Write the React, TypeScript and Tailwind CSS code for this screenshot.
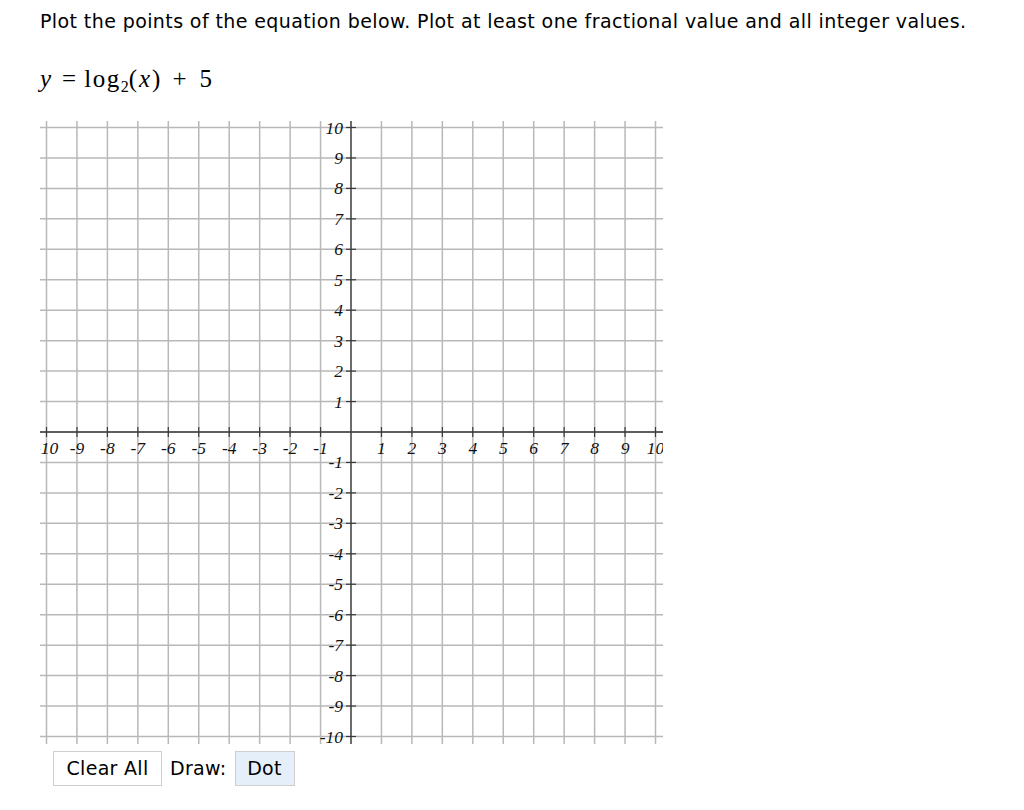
import React from 'react';

const PAD = 6.5;
const S = 30.45;
const SIZE = 623;

const px = (v: number) => PAD + (v + 10) * S;
const py = (v: number) => PAD + (10 - v) * S;

const range = Array.from({ length: 21 }, (_, i) => i - 10);

const Graph: React.FC = () => {
  return (
    <svg width={SIZE} height={SIZE} viewBox={`0 0 ${SIZE} ${SIZE}`} className="block overflow-visible">
      <defs>
        <clipPath id="plane">
          <rect x={0} y={-40} width={SIZE} height={SIZE + 80} />
        </clipPath>
      </defs>
      {/* grid */}
      {range.map((v) => (
        <g key={`g${v}`}>
          <line x1={px(v)} y1={0} x2={px(v)} y2={SIZE} stroke="#b8b8b8" strokeWidth="1.5" />
          <line x1={0} y1={py(v)} x2={SIZE} y2={py(v)} stroke="#b8b8b8" strokeWidth="1.5" />
        </g>
      ))}
      {/* axes */}
      <line x1={0} y1={py(0)} x2={SIZE} y2={py(0)} stroke="#3a3a3a" strokeWidth="1.3" />
      <line x1={px(0)} y1={0} x2={px(0)} y2={SIZE} stroke="#3a3a3a" strokeWidth="1.3" />
      {/* ticks */}
      {range.filter((v) => v !== 0).map((v) => (
        <g key={`t${v}`}>
          <line x1={px(v)} y1={py(0) - 5} x2={px(v)} y2={py(0) + 5} stroke="#3a3a3a" strokeWidth="1.2" />
          <line x1={px(0) - 5} y1={py(v)} x2={px(0) + 5} y2={py(v)} stroke="#3a3a3a" strokeWidth="1.2" />
        </g>
      ))}
      {/* labels */}
      <g fontFamily="'Liberation Serif', serif" fontStyle="italic" fontSize="17.5" fill="#111" clipPath="url(#plane)">
        {range.filter((v) => v !== 0).map((v) => (
          <text key={`x${v}`} x={px(v)} y={py(0) + 22} textAnchor="middle">
            {v}
          </text>
        ))}
        {range.filter((v) => v !== 0).map((v) => (
          <text key={`y${v}`} x={px(0) - 8} y={py(v) + 6} textAnchor="end">
            {v}
          </text>
        ))}
      </g>
    </svg>
  );
};

export default function App() {
  return (
    <div className="min-h-screen bg-white text-black font-['DejaVu_Sans',sans-serif]">
      <div className="pl-10 pt-[9px]">
        <p className="text-[19px] leading-[24px] tracking-[0.4px]">
          Plot the points of the equation below. Plot at least one fractional value and all integer values.
        </p>
        <div className="mt-[27px] h-[30px] flex items-baseline font-['Liberation_Serif',serif] text-[25px]">
          <span className="italic">y</span>
          <span className="ml-[11px] mr-[8px]">=</span>
          <span className="tracking-[1.5px]">log</span>
          <span className="text-[16px] relative top-[5px]">2</span>
          <span>(</span>
          <span className="italic mx-[2px]">x</span>
          <span>)</span>
          <span className="ml-[12px] mr-[13px]">+</span>
          <span>5</span>
        </div>
        <div className="mt-[31px]">
          <Graph />
        </div>
        <div className="mt-[7px] ml-[13px] flex items-center gap-[8px] text-[19px] tracking-[0.3px]">
          <button className="h-[35px] w-[109px] border border-[#cfcfcf] bg-white">Clear All</button>
          <span>Draw:</span>
          <button className="h-[35px] w-[60px] border border-[#cfcfcf] bg-[#e5eff9]">Dot</button>
        </div>
      </div>
    </div>
  );
}
